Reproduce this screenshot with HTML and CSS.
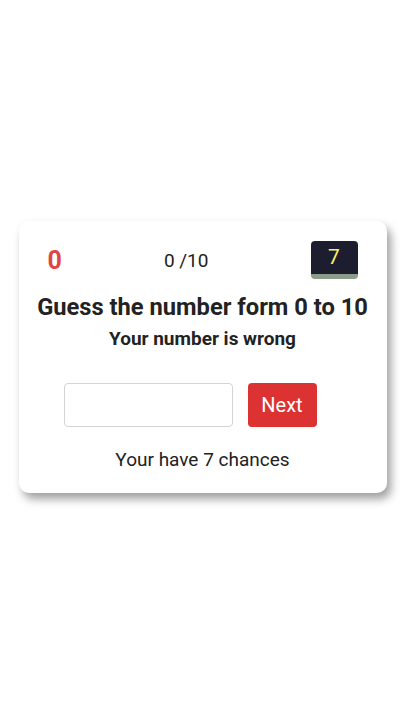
FILE: index.html
```html
<!DOCTYPE html>
<html lang="en">
<head>
    <meta charset="UTF-8">
    <meta name="viewport" content="width=device-width, initial-scale=1.0">
    <title>Guess the number</title>
    <link rel="stylesheet" href="styles.css">
</head>
<body>
    <div class="game-card">
        <div class="top-row">
            <span class="score">0</span>
            <span class="round">0 /10</span>
            <span class="chance-badge">7</span>
        </div>

        <h1 class="title">Guess the number form 0 to 10</h1>
        <p class="message">Your number is wrong</p>

        <form class="guess-form">
            <input type="text" class="guess-input">
            <button type="button" class="btn-next">Next</button>
        </form>

        <p class="chances">Your have 7 chances</p>
    </div>
</body>
</html>
```

FILE: styles.css
```css
* {
    margin: 0;
    padding: 0;
    box-sizing: border-box;
}

body {
    font-family: Roboto, 'Liberation Sans', sans-serif;
    background: #fff;
    color: #222;
    min-height: 100vh;
    display: flex;
    align-items: center;
    justify-content: center;
    padding-bottom: 6px;
}

.game-card {
    width: 368px;
    background: white;
    border-radius: 10px;
    padding: 20px 29px 21px;
    box-shadow: 4px 6px 10px rgba(0,0,0,0.38);
    text-align: center;
}

.top-row {
    display: flex;
    justify-content: space-between;
    align-items: center;
    height: 38px;
}

.score {
    color: #e04545;
    font-size: 25px;
    font-weight: 700;
}

.round {
    font-size: 19px;
}

.chance-badge {
    width: 47px;
    height: 38px;
    background: #1c1e30;
    border-bottom: 5px solid #8a9c8a;
    border-radius: 4px;
    color: #fbef66;
    font-size: 21px;
    line-height: 33px;
}

.title {
    margin: 14px -12px 0;
    font-size: 23.7px;
    line-height: 28px;
    font-weight: 700;
    white-space: nowrap;
}

.message {
    margin-top: 6px;
    font-size: 19px;
    line-height: 24px;
    font-weight: 700;
}

.guess-form {
    display: flex;
    justify-content: center;
    gap: 15px;
    margin-top: 32px;
    padding-right: 25px;
}

.guess-input {
    width: 169px;
    height: 44px;
    border: 1px solid #d4d4d4;
    border-radius: 4px;
    font-size: 18px;
    padding: 0 10px;
}

.btn-next {
    width: 69px;
    height: 44px;
    background: #dc3232;
    color: white;
    border: none;
    border-radius: 4px;
    font-family: inherit;
    font-size: 20px;
}

.chances {
    margin-top: 21px;
    font-size: 19px;
    line-height: 24px;
}
```
